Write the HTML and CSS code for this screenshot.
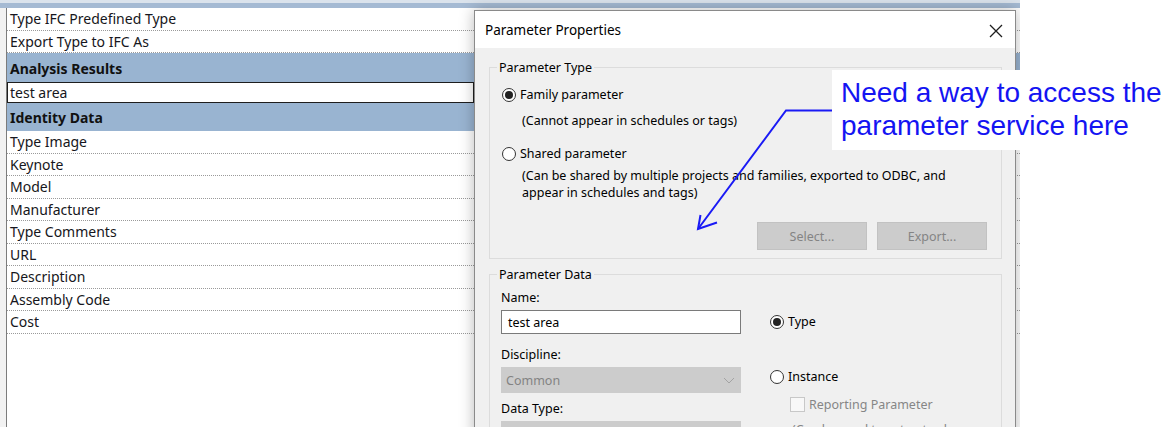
FILE: index.html
```html
<!DOCTYPE html>
<html>
<head>
<meta charset="utf-8">
<link rel="stylesheet" href="styles.css">
</head>
<body>
<div class="screen">
  <div class="shot">
    <div class="panel">
      <div class="topbar"></div>
      <div class="panel-body">
        <div class="gutter"></div>
        <div class="table">
          <div class="row">Type IFC Predefined Type</div>
          <div class="row">Export Type to IFC As</div>
          <div class="row hdr">Analysis Results</div>
          <div class="row edit">test area</div>
          <div class="row hdr">Identity Data</div>
          <div class="row">Type Image</div>
          <div class="row">Keynote</div>
          <div class="row">Model</div>
          <div class="row">Manufacturer</div>
          <div class="row">Type Comments</div>
          <div class="row">URL</div>
          <div class="row">Description</div>
          <div class="row">Assembly Code</div>
          <div class="row">Cost</div>
        </div>
      </div>
    </div>

    <div class="dialog">
      <div class="titlebar">
        <span class="title">Parameter Properties</span>
        <svg class="close" width="14" height="14" viewBox="0 0 14 14"><path d="M1 1 L13 13 M13 1 L1 13" stroke="#1e1e1e" stroke-width="1.3" fill="none"/></svg>
      </div>
      <div class="dbody">
        <fieldset class="group g1">
          <legend>Parameter Type</legend>
          <div class="opt first"><span class="radio on"></span><span>Family parameter</span></div>
          <div class="desc d1">(Cannot appear in schedules or tags)</div>
          <div class="opt second"><span class="radio"></span><span>Shared parameter</span></div>
          <div class="desc d2">(Can be shared by multiple projects and families, exported to ODBC, and<br>appear in schedules and tags)</div>
          <div class="buttons">
            <div class="btn">Select...</div>
            <div class="btn">Export...</div>
          </div>
        </fieldset>
        <fieldset class="group g2">
          <legend>Parameter Data</legend>
          <div class="cols">
            <div class="col-left">
              <div class="lbl l-name">Name:</div>
              <div class="input">test area</div>
              <div class="lbl l-gap">Discipline:</div>
              <div class="combo"><span>Common</span><svg width="12" height="7" viewBox="0 0 12 7"><path d="M1 1 L6 6 L11 1" stroke="#a3a3a3" stroke-width="1" fill="none"/></svg></div>
              <div class="lbl l-dt">Data Type:</div>
              <div class="combo"></div>
            </div>
            <div class="col-right">
              <div class="opt o-type"><span class="radio on"></span><span>Type</span></div>
              <div class="opt o-inst"><span class="radio"></span><span>Instance</span></div>
              <div class="chk-row"><span class="chk"></span><span>Reporting Parameter</span></div>
              <div class="grey-note">(Can be used to extract value</div>
            </div>
          </div>
        </fieldset>
      </div>
    </div>
  </div>

  <div class="note">Need a way to access the<br>parameter service here</div>
  <svg class="arrow" width="1167" height="445" viewBox="0 0 1167 445">
    <polyline points="832,110.5 786,110.5 698,229" stroke="#1a1af5" stroke-width="2" fill="none"/>
    <polyline points="700.5,215 698,229 717,222.5" stroke="#1a1af5" stroke-width="2" fill="none"/>
  </svg>
</div>
</body>
</html>
```

FILE: styles.css
```css
* { box-sizing: border-box; }
html, body { margin: 0; padding: 0; background: #fff; }
.screen {
  position: relative;
  width: 1167px;
  height: 445px;
  overflow: hidden;
  background: #fff;
  font-family: "Noto Sans", "DejaVu Sans", sans-serif;
}
.shot {
  position: relative;
  width: 1020px;
  height: 427px;
  overflow: hidden;
}
.panel {
  width: 1020px;
  height: 427px;
  display: flex;
  flex-direction: column;
}
.topbar {
  height: 8px;
  flex: none;
  background: linear-gradient(#dbe3ec 0, #dbe3ec 3px, #a5bad3 3px, #a5bad3 8px);
}
.panel-body {
  flex: 1;
  display: flex;
}
.gutter {
  width: 7px;
  background: #f2f2f2;
  border-right: 1px solid #7c7c7c;
}
.table {
  flex: 1;
  background: #fff;
}
.row {
  height: 22.5px;
  display: flex;
  align-items: center;
  padding-left: 3px;
  font-size: 14px;
  color: #161620;
  border-bottom: 1px dotted #9a9a9a;
  white-space: nowrap;
}
.row.hdr {
  height: 28.5px;
  padding-top: 2px;
  background: #99b4d1;
  font-weight: bold;
  border-bottom: none;
  color: #111;
}
.row.edit {
  height: 21px;
  width: 467px;
  border: 1px solid #1e1e1e;
  padding-left: 2px;
}

/* dialog */
.dialog {
  position: absolute;
  left: 474px;
  top: 10px;
  width: 542px;
  height: 430px;
  background: #f0f0f0;
  border: 1px solid #8a8a8a;
  box-shadow: 0 0 14px rgba(0,0,0,0.28);
  font-size: 12.5px;
  color: #000;
}
.titlebar {
  height: 37px;
  background: #fff;
  display: flex;
  align-items: center;
  justify-content: space-between;
  padding: 0 12px 0 10px;
}
.title {
  font-size: 13.5px;
  color: #000;
}
.close { margin-top: 3px; }
.dbody {
  padding: 11px 13px 0 14px;
}
.group {
  margin: 0;
  border: 1px solid #dcdcdc;
  min-width: 0;
}
.group legend {
  padding: 0 2px;
  line-height: 17px;
  color: #000;
}
.g1 legend { margin-left: -5px; }
.g2 legend { margin-left: -4px; }
.g1 { padding: 0 14px 8px 12px; }
.g2 { padding: 0 14px 20px 11px; margin-top: 7px; }
.opt {
  display: flex;
  align-items: center;
  gap: 4px;
  height: 17px;
  line-height: 17px;
}
.opt.first { margin-top: 10px; }
.opt.second { margin-top: 16px; }
.radio {
  width: 14px;
  height: 14px;
  border: 1px solid #333;
  border-radius: 50%;
  background: #fff;
  display: flex;
  align-items: center;
  justify-content: center;
  flex: none;
}
.radio.on::after {
  content: "";
  width: 8px;
  height: 8px;
  border-radius: 50%;
  background: #222;
}
.desc {
  margin-left: 20px;
  line-height: 17px;
}
.desc.d1 { margin-top: 9px; }
.desc.d2 { margin-top: 5px; }
.buttons {
  display: flex;
  justify-content: flex-end;
  gap: 10px;
  margin-top: 21px;
}
.btn {
  width: 110px;
  height: 28px;
  background: #cccccc;
  border: 1px solid #c2c2c2;
  color: #848484;
  display: flex;
  align-items: center;
  justify-content: center;
}
.cols {
  display: grid;
  grid-template-columns: 240px auto;
  column-gap: 29px;
}
.lbl { line-height: 17px; }
.l-name { margin-top: 6px; }
.l-gap { margin-top: 12px; }
.l-dt { margin-top: 7px; }
.input {
  margin-top: 4px;
  height: 24px;
  background: #fff;
  border: 1px solid #7a7a7a;
  padding-left: 6px;
  display: flex;
  align-items: center;
}
.combo {
  margin-top: 4px;
  height: 26px;
  background: #cccccc;
  border: 1px solid #cccccc;
  color: #838383;
  padding: 0 5px 0 4px;
  display: flex;
  align-items: center;
  justify-content: space-between;
}
.o-type { margin-top: 30px; }
.o-inst { margin-top: 38px; }
.chk-row {
  margin-top: 11px;
  margin-left: 20px;
  display: flex;
  align-items: center;
  gap: 4px;
  height: 17px;
  color: #868686;
}
.chk {
  width: 15px;
  height: 15px;
  border: 1px solid #c8c8c8;
  background: #f8f8f8;
  flex: none;
}
.grey-note {
  margin-top: 8px;
  margin-left: 22px;
  color: #868686;
  line-height: 17px;
  white-space: nowrap;
}

/* annotation */
.note {
  position: absolute;
  left: 832px;
  top: 70px;
  width: 335px;
  height: 80px;
  background: #fff;
  padding: 6px 0 0 9px;
  font-family: "Liberation Sans", Arial, sans-serif;
  font-size: 28px;
  line-height: 33px;
  color: #1414f2;
  white-space: nowrap;
}
.arrow {
  position: absolute;
  left: 0;
  top: 0;
  pointer-events: none;
}
```
